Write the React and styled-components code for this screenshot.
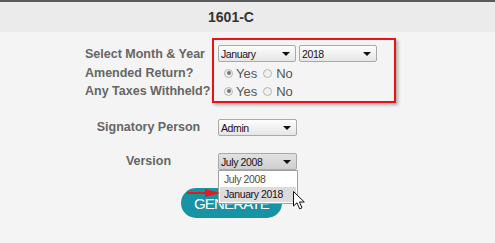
import styled, { createGlobalStyle } from 'styled-components'

const GlobalStyle = createGlobalStyle`
  html, body {
    margin: 0;
    padding: 0;
    background: #f4f4f4;
    font-family: "Liberation Sans", Arial, sans-serif;
  }
`

const Page = styled.div`
  width: 495px;
  height: 243px;
  overflow: hidden;
  background: #f4f4f4;
`

const Header = styled.div`
  border-top: 2px solid #595959;
  height: 30px;
  background: #ebebeb;
  display: flex;
  align-items: center;
  justify-content: center;
  padding-right: 33px;
  font-size: 14px;
  font-weight: bold;
  color: #333;
`

const Form = styled.div`
  margin: 6px 0 0 85px;
  display: flex;
  flex-direction: column;
`

const Row = styled.div`
  display: grid;
  grid-template-columns: 127px auto;
  align-items: ${(p) => (p.top ? 'start' : 'center')};
  margin-top: ${(p) => p.mt || 0}px;
  ${(p) => !p.top && 'height: 17px;'}
`

const LabelStack = styled.div`
  padding-top: 7px;
  display: flex;
  flex-direction: column;
`

const Label = styled.div`
  font-size: 12.5px;
  font-weight: bold;
  color: #666;
  line-height: 18.5px;
  white-space: nowrap;
  text-align: ${(p) => (p.center ? 'center' : 'left')};
`

const HighlightBox = styled.div`
  width: 174px;
  border: 2px solid #ee1111;
  padding: 5px 4px 1px 2px;
  box-shadow: 2px 2px 3px rgba(0, 0, 0, 0.3);
  position: relative;
  z-index: 1;
`

const SelectRow = styled.div`
  display: flex;
  gap: 3px;
  padding-left: 2px;
`

const Select = styled.div`
  position: relative;
  box-sizing: border-box;
  width: ${(p) => p.w || 78}px;
  height: 17px;
  border: 1px solid #a9a9a9;
  border-radius: 2px;
  background: ${(p) =>
    p.open
      ? 'linear-gradient(#e2e2e2, #cfcfcf)'
      : 'linear-gradient(#fdfdfd, #e6e6e6)'};
  font-size: 10.5px;
  letter-spacing: -0.4px;
  color: #1a1020;
  line-height: 16px;
  padding-left: 2px;

  &::after {
    content: '';
    position: absolute;
    right: 5px;
    top: 6px;
    border-left: 4px solid transparent;
    border-right: 4px solid transparent;
    border-top: 4px solid #111;
  }
`

const RadioRow = styled.div`
  display: flex;
  align-items: center;
  height: 18px;
  padding-left: 8px;
  font-size: 13px;
  color: #555;
  ${(p) => p.first && 'margin-top: 2px;'}
`

const Radio = styled.span`
  box-sizing: border-box;
  width: 9px;
  height: 9px;
  border-radius: 50%;
  border: 1px solid #b5b5b5;
  background: #f0f0f0;
  margin-right: ${(p) => p.mr}px;
  margin-left: ${(p) => p.ml || 0}px;
  position: relative;

  ${(p) =>
    p.checked &&
    `&::after {
      content: '';
      position: absolute;
      left: 1.5px;
      top: 1.5px;
      width: 4px;
      height: 4px;
      border-radius: 50%;
      background: #777;
    }`}
`

const Anchor = styled.div`
  position: relative;
  margin-left: 6px;
`

const DropList = styled.div`
  position: absolute;
  left: 0;
  top: 17px;
  width: 80px;
  box-sizing: border-box;
  border: 1px solid #a0a0a0;
  background: #fff;
  padding: 1px;
  z-index: 3;
`

const DropItem = styled.div`
  height: 15px;
  line-height: 15px;
  padding-left: 4px;
  font-size: 10.5px;
  letter-spacing: -0.4px;
  color: ${(p) => (p.active ? '#1a1020' : '#5a4a30')};
  background: ${(p) => (p.active ? '#dcdcdc' : '#fff')};
`

const Overlay = styled.svg`
  position: absolute;
  left: ${(p) => p.x}px;
  top: ${(p) => p.y}px;
  z-index: 4;
  overflow: visible;
`

const Button = styled.div`
  margin: 19px 0 0 96px;
  width: 101px;
  height: 30px;
  border-radius: 15px;
  background: #1893a6;
  color: #fff;
  font-size: 15px;
  letter-spacing: -0.8px;
  display: flex;
  align-items: center;
  justify-content: center;
`

function App() {
  return (
    <Page>
      <GlobalStyle />
      <Header>1601-C</Header>
      <Form>
        <Row top>
          <LabelStack>
            <Label>Select Month &amp; Year</Label>
            <Label>Amended Return?</Label>
            <Label>Any Taxes Withheld?</Label>
          </LabelStack>
          <HighlightBox>
            <SelectRow>
              <Select>January</Select>
              <Select>2018</Select>
            </SelectRow>
            <RadioRow first>
              <Radio checked mr={3} />
              Yes
              <Radio ml={6} mr={4} />
              No
            </RadioRow>
            <RadioRow>
              <Radio checked mr={3} />
              Yes
              <Radio ml={6} mr={4} />
              No
            </RadioRow>
          </HighlightBox>
        </Row>
        <Row mt={15}>
          <Label center>Signatory Person</Label>
          <Anchor>
            <Select w={79}>Admin</Select>
          </Anchor>
        </Row>
        <Row mt={17}>
          <Label center>Version</Label>
          <Anchor>
            <Select w={79} open>
              July 2008
            </Select>
            <DropList>
              <DropItem>July 2008</DropItem>
              <DropItem active>January 2018</DropItem>
            </DropList>
            <Overlay x={-31} y={36} width="34" height="10">
              <line x1="0" y1="4" x2="22" y2="4" stroke="#e21b1b" strokeWidth="2" />
              <polygon points="18,0 33,4 18,8" fill="#e21b1b" />
            </Overlay>
            <Overlay x={75} y={38} width="13" height="20">
              <path
                d="M0.5,0.5 L0.5,15 L4,11.8 L6.6,17.8 L9,16.8 L6.5,11 L11.3,11 Z"
                fill="#fff"
                stroke="#111"
                strokeWidth="1"
                strokeLinejoin="round"
              />
            </Overlay>
          </Anchor>
        </Row>
        <Button>GENERATE</Button>
      </Form>
    </Page>
  )
}

export default App
